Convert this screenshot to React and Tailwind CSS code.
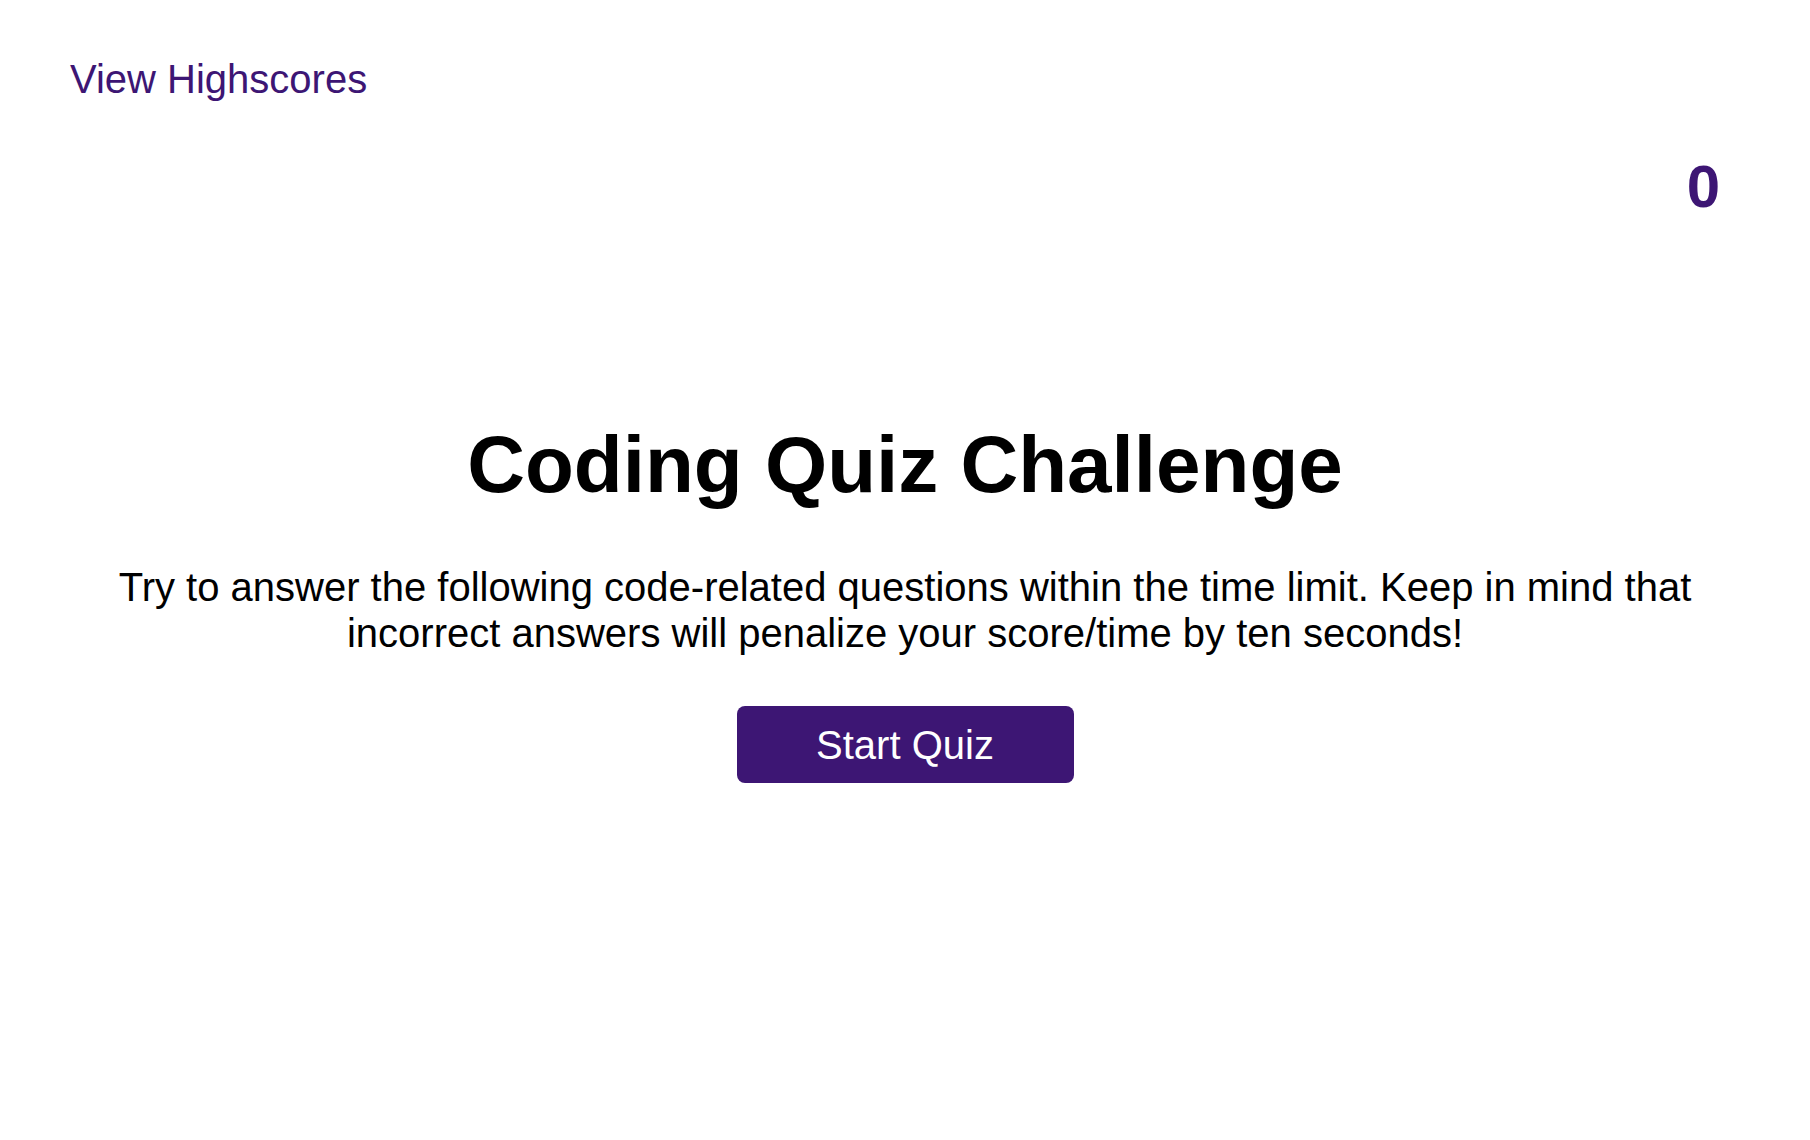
export default function App() {
  return (
    <div className="min-h-screen bg-white text-black font-['Liberation_Sans',Arial,Helvetica,sans-serif]">
      <header className="pl-[70px] pt-[56px]">
        <a href="#" className="text-[40px] leading-[46px] text-[#3d1674] no-underline">
          View Highscores
        </a>
      </header>
      <div className="flex justify-end pr-[90px] mt-[50px]">
        <span className="text-[60px] leading-[69px] font-bold text-[#3d1674]">0</span>
      </div>
      <main className="mt-[198px] flex flex-col items-center text-center px-[80px]">
        <h1 className="text-[80px] leading-[92px] font-bold">Coding Quiz Challenge</h1>
        <p className="mt-[53px] text-[40px] leading-[46px]">
          Try to answer the following code-related questions within the time limit. Keep in mind that
          incorrect answers will penalize your score/time by ten seconds!
        </p>
        <button className="mt-[50px] w-[337px] h-[77px] rounded-[8px] bg-[#3d1674] text-white text-[40px] leading-[46px]">
          Start Quiz
        </button>
      </main>
    </div>
  );
}
